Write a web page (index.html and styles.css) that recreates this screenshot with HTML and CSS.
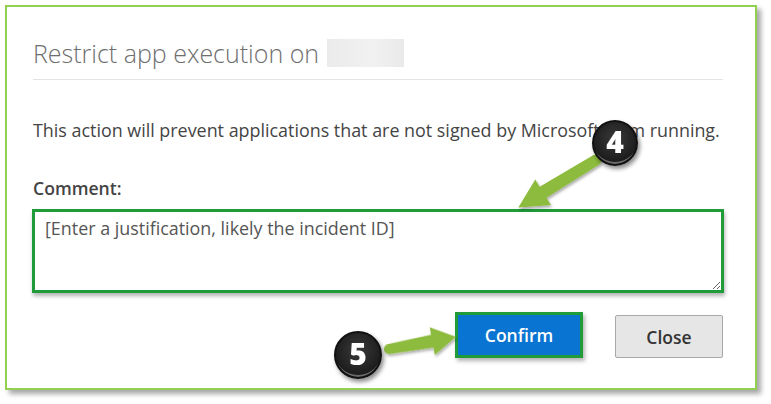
FILE: index.html
```html
<!DOCTYPE html>
<html lang="en">

<head>
    <meta charset="UTF-8">
    <meta name="viewport" content="width=device-width, initial-scale=1.0">
    <title>Restrict app execution</title>
    <link rel="stylesheet" href="styles.css">
</head>

<body>

    <div class="frame">
        <div class="title">
            <span>Restrict app execution on</span>
            <span class="redacted"></span>
        </div>

        <p class="message">This action will prevent applications that are not signed by Microsoft from running.</p>

        <label class="label" for="comment">Comment:</label>
        <textarea id="comment" class="comment" placeholder="[Enter a justification, likely the incident ID]"></textarea>

        <div class="actions">
            <button class="btn btn-primary">Confirm</button>
            <button class="btn btn-default">Close</button>
        </div>
    </div>

    <!-- Callout arrows -->
    <svg class="callouts" width="771" height="404" viewBox="0 0 771 404">
        <defs>
            <filter id="shade" x="-20%" y="-20%" width="140%" height="140%">
                <feDropShadow dx="1" dy="2" stdDeviation="1.5" flood-color="#000" flood-opacity="0.35" />
            </filter>
        </defs>
        <g filter="url(#shade)" fill="#8dbb3d">
            <g transform="translate(596 160) rotate(148.6)">
                <circle cx="0" cy="0" r="5.5" />
                <polygon points="0,-5.5 62,-6.5 62,-15 91,0 62,15 62,6.5 0,5.5" />
            </g>
            <g transform="translate(389 349) rotate(-10.3)">
                <circle cx="0" cy="0" r="5" />
                <polygon points="0,-5 44,-6.5 44,-14 68,0 44,14 44,6.5 0,5" />
            </g>
        </g>
    </svg>

    <div class="badge badge-4">4</div>
    <div class="badge badge-5">5</div>

</body>

</html>
```

FILE: styles.css
```css
body {
    margin: 0;
    background: white;
    font-family: "Open Sans", "Noto Sans", sans-serif;
    width: 771px;
    height: 404px;
    position: relative;
    overflow: hidden;
}

/* Dialog frame */
.frame {
    box-sizing: border-box;
    margin: 5px 0 0 5px;
    width: 752px;
    height: 385px;
    border: 2px solid #92d050;
    background: white;
    box-shadow: 4px 4px 5px rgba(0, 0, 0, 0.35);
    padding: 0 32px 0 26px;
    display: flex;
    flex-direction: column;
}

.title {
    display: flex;
    align-items: center;
    gap: 8px;
    height: 44px;
    margin-top: 24px;
    padding-bottom: 4px;
    border-bottom: 1px solid #e3e3e3;
    font-size: 25px;
    font-weight: 300;
    color: #6e6e6e;
}

.redacted {
    width: 77px;
    height: 28px;
    background: linear-gradient(90deg, #ebebeb, #f1f1f1 60%, #e9e9e9);
}

.message {
    margin: 38px 0 0;
    font-size: 17.9px;
    line-height: 24px;
    color: #444;
    white-space: nowrap;
}

.label {
    margin-top: 34px;
    font-size: 17.6px;
    line-height: 24px;
    font-weight: 600;
    color: #444;
}

.comment {
    box-sizing: border-box;
    margin: 9px 0 0 -1px;
    width: 692px;
    height: 84px;
    border: 3px solid #1f9b3a;
    box-shadow: 1px 3px 4px rgba(0, 0, 0, 0.3);
    padding: 4px 10px;
    font-family: inherit;
    font-size: 17.9px;
    line-height: 24px;
    color: #555;
    outline: none;
}

.comment::placeholder {
    color: #555;
}

.actions {
    display: flex;
    justify-content: flex-end;
    align-items: center;
    gap: 32px;
    margin-top: 19px;
}

.btn {
    box-sizing: border-box;
    font-family: inherit;
    font-size: 17.5px;
    font-weight: 600;
    cursor: pointer;
}

.btn-primary {
    width: 128px;
    height: 46px;
    background: #0a74d3;
    color: white;
    border: 3px solid #1f9b3a;
    box-shadow: 2px 3px 4px rgba(0, 0, 0, 0.3);
}

.btn-default {
    width: 108px;
    height: 43px;
    margin-top: 3px;
    background: #e6e6e6;
    color: #333;
    border: 1px solid #a9a9a9;
    border-radius: 2px;
}

/* Step callouts */
.callouts {
    position: absolute;
    left: 0;
    top: 0;
    pointer-events: none;
}

.badge {
    position: absolute;
    box-sizing: border-box;
    width: 46px;
    height: 46px;
    border-radius: 50%;
    background: radial-gradient(circle at 50% 40%, #3a3a3a, #1c1c1c 70%);
    border: 2px solid #111;
    box-shadow: inset 0 -4px 0 -2px rgba(255, 255, 255, 0.35), 2px 3px 4px rgba(0, 0, 0, 0.45);
    color: white;
    font-family: "Open Sans", sans-serif;
    font-weight: 800;
    font-size: 30px;
    line-height: 40px;
    text-align: center;
}

.badge-4 {
    left: 592px;
    top: 120px;
}

.badge-5 {
    left: 334px;
    top: 331px;
    width: 48px;
    height: 48px;
    line-height: 42px;
}
```
